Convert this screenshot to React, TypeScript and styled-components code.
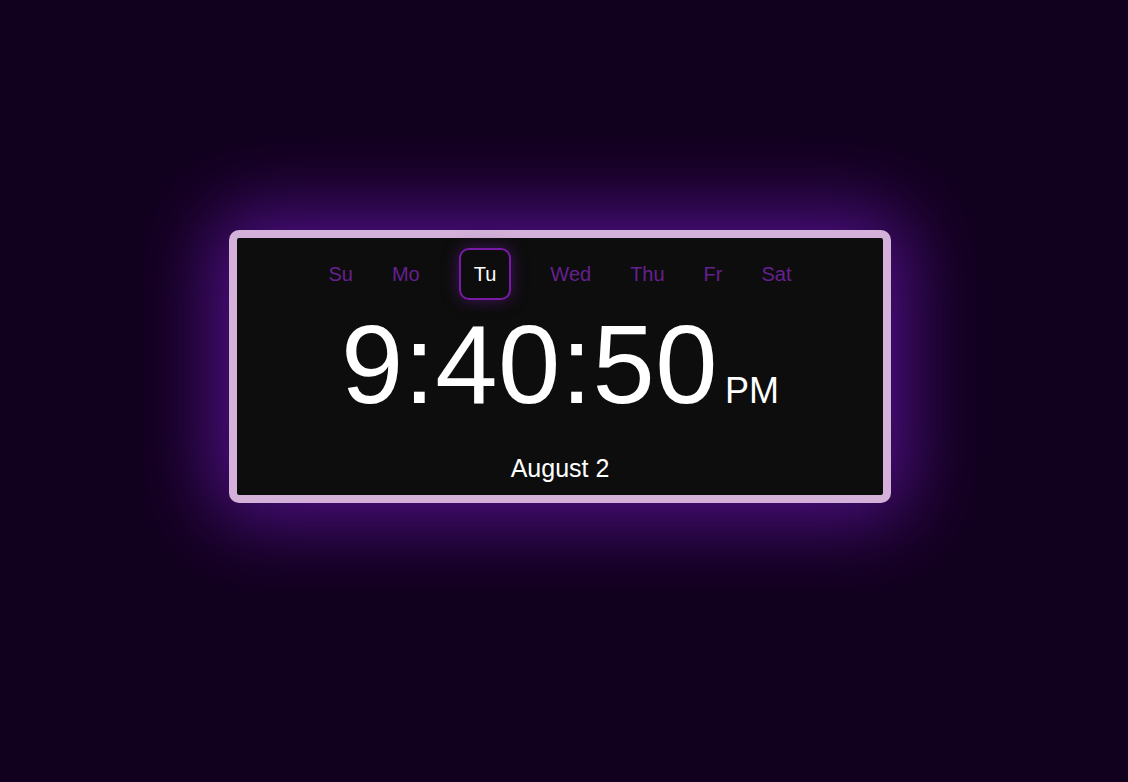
import styled, { createGlobalStyle } from "styled-components";

const GlobalStyle = createGlobalStyle`
  html, body {
    margin: 0;
    padding: 0;
    background: #12011e;
    font-family: "Liberation Sans", Arial, sans-serif;
  }
`;

const Page = styled.div`
  min-height: 782px;
  display: flex;
  justify-content: center;
  align-items: flex-start;
  padding: 230px 8px 0 0;
  box-sizing: border-box;
`;

const Card = styled.div`
  width: 662px;
  box-sizing: border-box;
  border: 8px solid #d3b1d8;
  border-radius: 10px;
  background: #0d0d0d;
  box-shadow: 0 0 80px 15px #55118f;
  padding: 10px 0 13px;
  display: flex;
  flex-direction: column;
  align-items: center;
`;

const Days = styled.ul`
  list-style: none;
  margin: 0;
  padding: 0;
  display: flex;
  align-items: center;
  gap: 39px;
  height: 52px;
`;

const Day = styled.li`
  font-size: 20px;
  line-height: 24px;
  color: #66208f;
`;

const ActiveDay = styled(Day)`
  padding: 12px 13px;
  border: 2px solid #7a1aa6;
  border-radius: 10px;
  color: #ffffff;
  box-shadow: 0 0 16px rgba(110, 25, 160, 0.55);
`;

const Time = styled.div`
  display: flex;
  align-items: baseline;
  color: #ffffff;
  margin-top: 5px;
`;

const Digits = styled.span`
  font-size: 112px;
  line-height: 120px;
  letter-spacing: 0.5px;
`;

const Meridiem = styled.span`
  font-size: 36px;
  margin-left: 7px;
`;

const DateText = styled.div`
  color: #ffffff;
  font-size: 25px;
  line-height: 28px;
  margin-top: 29px;
`;

const days = ["Su", "Mo", "Tu", "Wed", "Thu", "Fr", "Sat"];
const today = "Tu";

export default function App() {
  return (
    <>
      <GlobalStyle />
      <Page>
        <Card>
          <Days>
            {days.map((d) =>
              d === today ? <ActiveDay key={d}>{d}</ActiveDay> : <Day key={d}>{d}</Day>
            )}
          </Days>
          <Time>
            <Digits>9:40:50</Digits>
            <Meridiem>PM</Meridiem>
          </Time>
          <DateText>August 2</DateText>
        </Card>
      </Page>
    </>
  );
}
